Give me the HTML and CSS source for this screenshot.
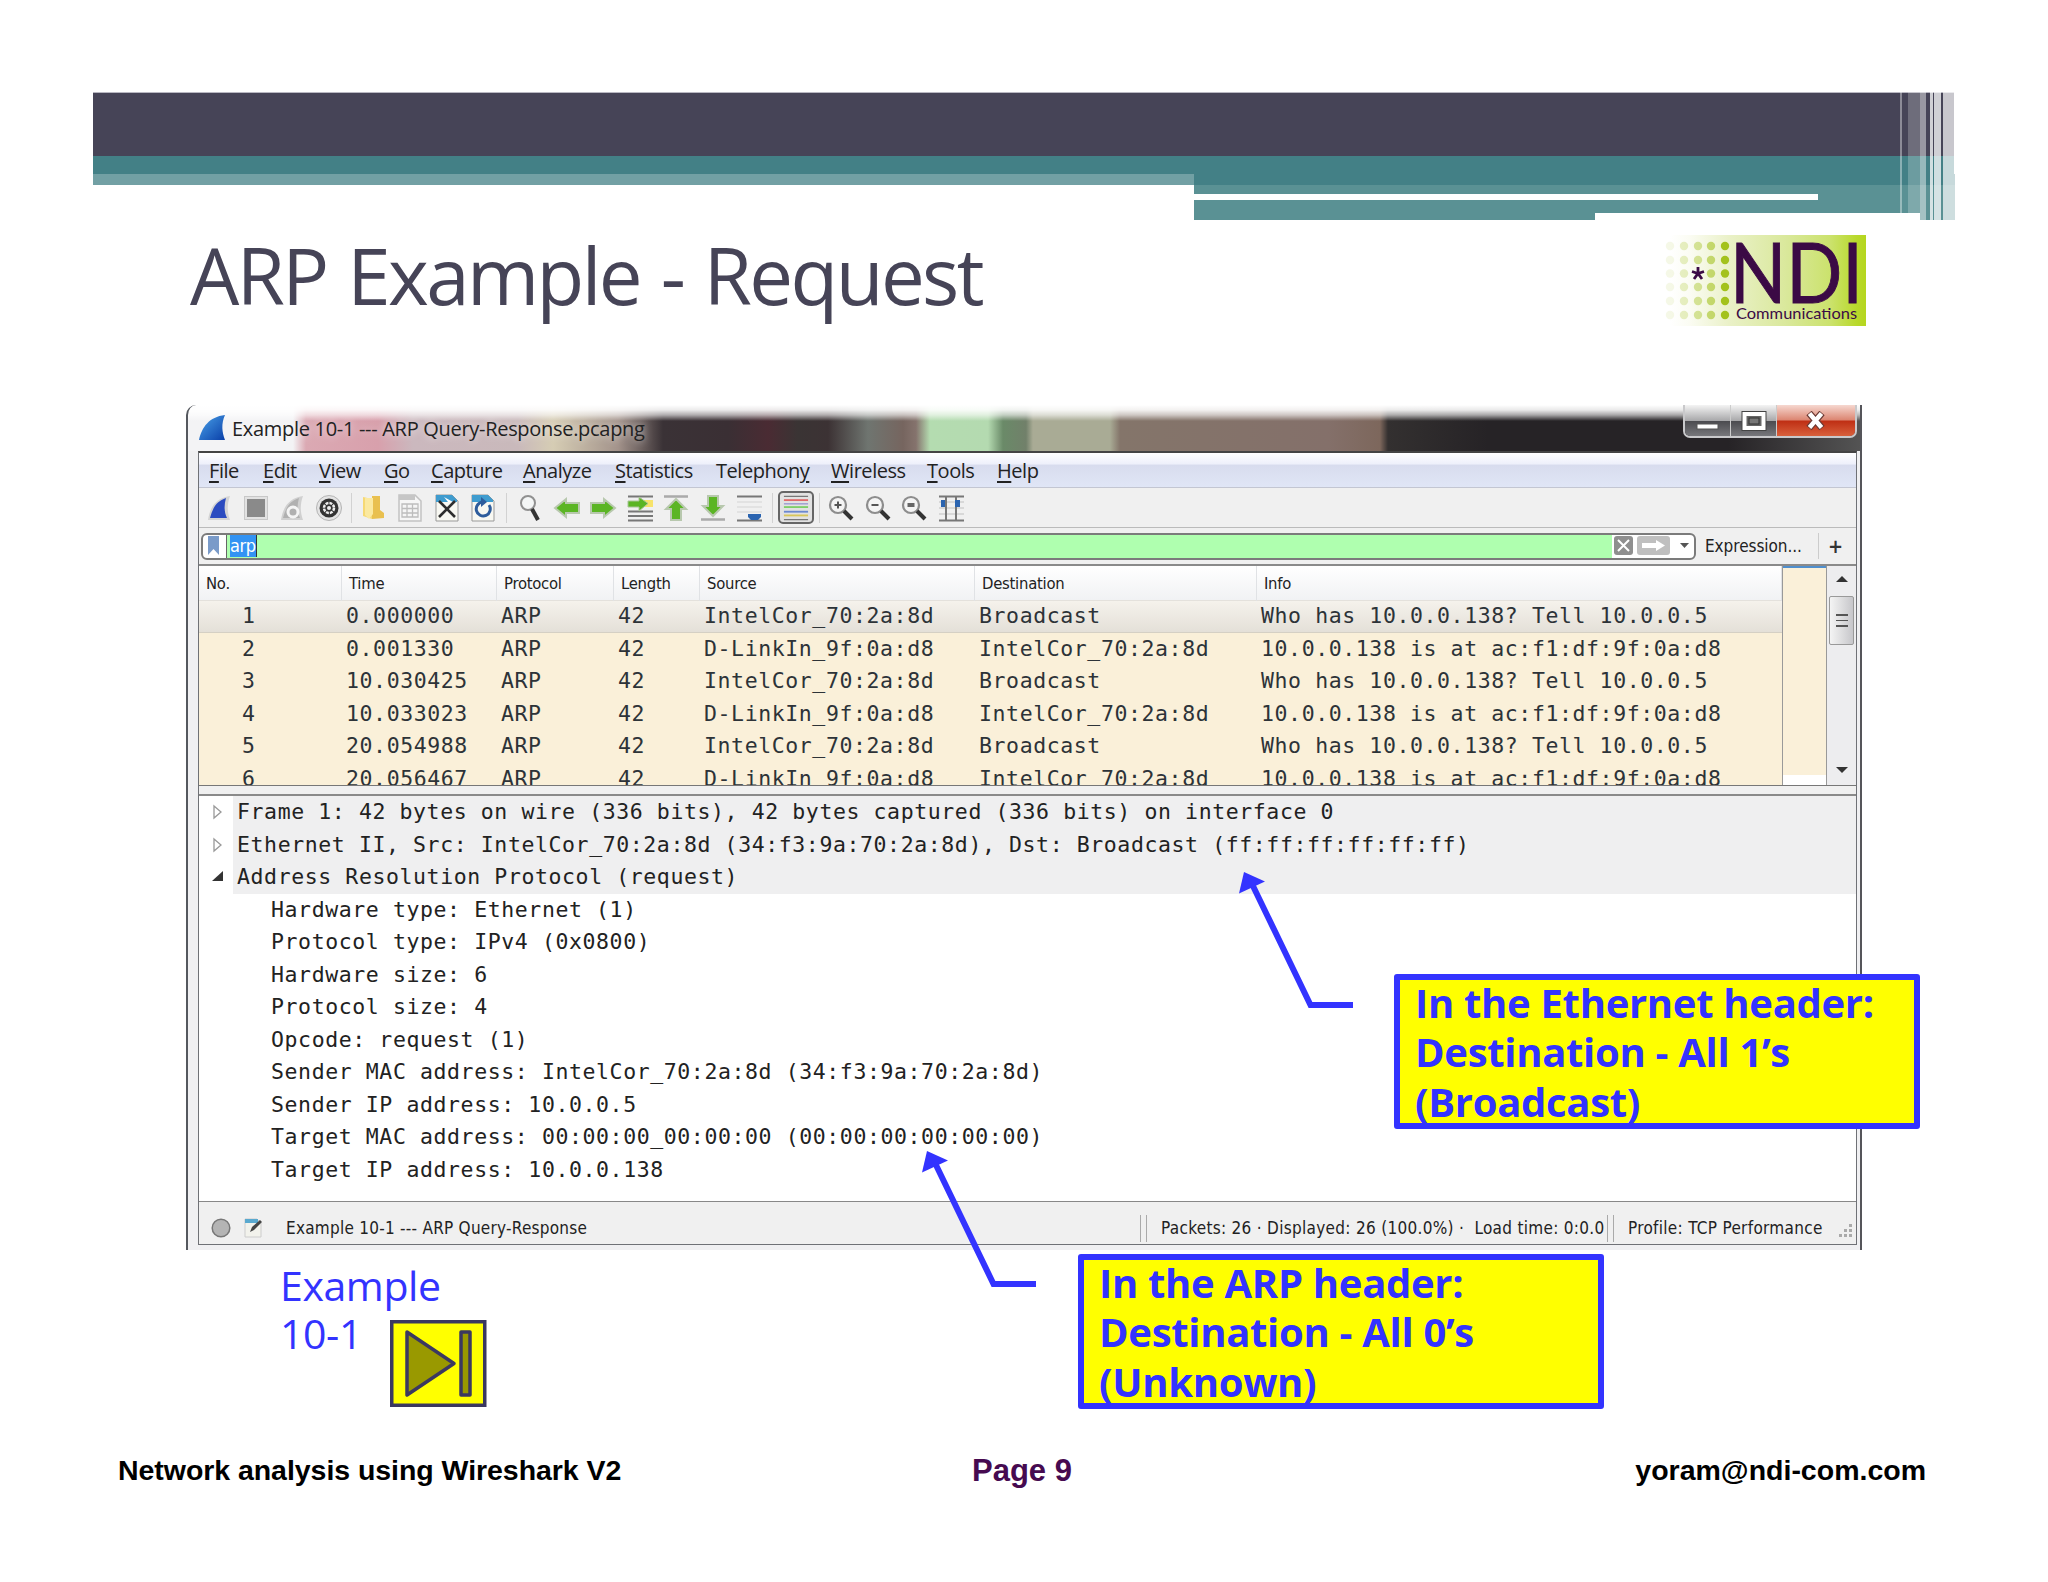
FILE: index.html
```html
<!DOCTYPE html>
<html lang="en">

<head>
    <meta charset="UTF-8">
    <meta name="viewport" content="width=device-width, initial-scale=1.0">
    <title>ARP Example - Request</title>
    <link rel="stylesheet" href="styles.css">
</head>

<body>
    <div class="slide">
        <svg class="banner" width="1862" height="128" viewBox="0 0 1862 128" shape-rendering="crispEdges">
            <rect x="0" y="0" width="1861" height="64" fill="#464457" />
            <rect x="0" y="0" width="1861" height="1" fill="#b9b8c2" />
            <rect x="0" y="64" width="1861" height="18" fill="#438086" />
            <rect x="0" y="82" width="1101" height="11" fill="#72a0a4" />
            <rect x="1101" y="82" width="761" height="11" fill="#438086" />
            <rect x="1101" y="93" width="761" height="35" fill="#5a9194" />
            <rect x="1101" y="102" width="624" height="6" fill="#fff" />
            <!-- stripes on the right edge -->
            <g fill="#fff">
                <rect x="1807" y="0" width="2" height="128" opacity=".38" />
                <rect x="1815" y="0" width="12" height="128" opacity=".22" />
                <rect x="1827" y="0" width="6" height="128" opacity=".45" />
                <rect x="1837" y="0" width="3" height="128" opacity=".75" />
                <rect x="1841" y="0" width="7" height="128" opacity=".75" />
                <rect x="1850" y="0" width="12" height="128" opacity=".7" />
                <rect x="1502" y="121" width="325" height="7" />
            </g>
        </svg>

        <div class="heading">
            <h1>ARP Example - Request</h1>
            <svg class="logo" width="196" height="91" viewBox="0 0 196 91">
                <defs>
                    <linearGradient id="fade">
                        <stop offset="0" stop-color="#fff" />
                        <stop offset=".1" stop-color="#fbfcf3" />
                        <stop offset=".3" stop-color="#eaf1c8" />
                        <stop offset=".6" stop-color="#d9e89a" />
                        <stop offset=".82" stop-color="#cbe26c" />
                        <stop offset=".95" stop-color="#b9d92c" />
                        <stop offset="1" stop-color="#b5d61e" />
                    </linearGradient>
                </defs>
                <rect width="196" height="91" fill="url(#fade)" />
                <g fill="#a3c21c">
                    <g opacity=".1"><circle cx="0" cy="11" r="4.2" /><circle cx="0" cy="25" r="4.2" /><circle cx="0" cy="38.500" r="4.2" /><circle cx="0" cy="52" r="4.2" /><circle cx="0" cy="66" r="4.2" /><circle cx="0" cy="80" r="4.2" /></g>
                    <g opacity=".25"><circle cx="14" cy="11" r="4.2" /><circle cx="14" cy="25" r="4.2" /><circle cx="14" cy="38.500" r="4.2" /><circle cx="14" cy="52" r="4.2" /><circle cx="14" cy="66" r="4.2" /><circle cx="14" cy="80" r="4.2" /></g>
                    <g opacity=".42"><circle cx="28" cy="11" r="4.2" /><circle cx="28" cy="25" r="4.2" /><circle cx="28" cy="52" r="4.2" /><circle cx="28" cy="66" r="4.2" /><circle cx="28" cy="80" r="4.2" /></g>
                    <g opacity=".58"><circle cx="41" cy="11" r="4.2" /><circle cx="41" cy="25" r="4.2" /><circle cx="41" cy="38.500" r="4.2" /><circle cx="41" cy="52" r="4.2" /><circle cx="41" cy="66" r="4.2" /><circle cx="41" cy="80" r="4.2" /></g>
                    <g><circle cx="55" cy="11" r="4.2" /><circle cx="55" cy="25" r="4.2" /><circle cx="55" cy="38.500" r="4.2" /><circle cx="55" cy="52" r="4.2" /><circle cx="55" cy="66" r="4.2" /><circle cx="55" cy="80" r="4.2" /></g>
                </g>
                <path d="M28 32v6.500M22 36.500l6 2l6-2M24 44l4-5.500l4 5.500" fill="none" stroke="#3b0a45" stroke-width="2.800" />
                <text class="logo-name" x="60" y="68" textLength="133" lengthAdjust="spacingAndGlyphs">NDI</text>
                <text class="logo-sub" x="66" y="84" textLength="121" lengthAdjust="spacingAndGlyphs">Communications</text>
            </svg>
        </div>

        <div class="window">
            <div class="titlebar">
                <svg class="fin" width="27" height="26" viewBox="0 0 27 26">
                    <defs>
                        <linearGradient id="blue" x1="0" y1="0" x2="1" y2="1">
                            <stop offset="0" stop-color="#4aa3ea" />
                            <stop offset="1" stop-color="#0a3fa8" />
                        </linearGradient>
                    </defs>
                    <path d="M0 25C3 12 10 2 26 0c-4 9-3 17 0 25z" fill="url(#blue)" />
                </svg>
                <span class="caption">Example 10-1 --- ARP Query-Response.pcapng</span>
                <div class="buttons">
                    <span class="min"><svg width="24" height="8"><rect x="1" y="1" width="21" height="5" fill="#fff" stroke="#555" /></svg></span>
                    <span class="max"><svg width="26" height="20"><rect x="3.500" y="3" width="19" height="14" fill="none" stroke="#444" stroke-width="6" /><rect x="3.500" y="3" width="19" height="14" fill="#666" stroke="#fff" stroke-width="4" /><rect x="8" y="7" width="10" height="6" fill="#777" stroke="#333" /></svg></span>
                    <span class="close"><svg width="22" height="20"><path d="M4 2l13 15M17 2L4 17" stroke="#6b3a34" stroke-width="7" /><path d="M4.500 2.500l12 14M16.500 2.500l-12 14" stroke="#fff" stroke-width="4.500" /></svg></span>
                </div>
            </div>

            <div class="client">
                <div class="menu">
                    <span><u>F</u>ile</span>
                    <span><u>E</u>dit</span>
                    <span><u>V</u>iew</span>
                    <span><u>G</u>o</span>
                    <span><u>C</u>apture</span>
                    <span><u>A</u>nalyze</span>
                    <span><u>S</u>tatistics</span>
                    <span>Telephon<u>y</u></span>
                    <span><u>W</u>ireless</span>
                    <span><u>T</u>ools</span>
                    <span><u>H</u>elp</span>
                </div>

                <div class="toolbar">
                    <svg viewBox="0 0 28 28"><path d="M3 26C5 13 11 4 25 2c-3 8-3 16 0 24z" fill="#d4d4d4" /><path d="M5 24C8 13 12 7 21 4c-2 7-2 14 1 20z" fill="#2b4bc0" /></svg>
                    <svg viewBox="0 0 28 28"><rect x="2.500" y="2.500" width="23" height="23" fill="#e2e2e2" stroke="#c8c8c8" /><rect x="5" y="5" width="18" height="18" fill="#8a8a8a" /></svg>
                    <svg viewBox="0 0 28 28"><path d="M3 26C5 13 11 4 25 2c-3 8-3 16 0 24z" fill="#d0d0d0" /><path d="M5 24C8 13 12 7 21 4c-2 7-2 14 1 20z" fill="#b0b0b0" /><circle cx="15" cy="18" r="5" fill="none" stroke="#f4f4f4" stroke-width="3" /></svg>
                    <svg viewBox="0 0 28 28"><circle cx="14" cy="14" r="12.500" fill="#e4e4e4" stroke="#b4b4b4" /><circle cx="14" cy="14" r="9.500" fill="#333" /><circle cx="14" cy="14" r="5" fill="none" stroke="#eee" stroke-width="2.500" stroke-dasharray="2.900 1" /><circle cx="14" cy="14" r="2" fill="#eee" /></svg>
                    <i class="sep"></i>
                    <svg viewBox="0 0 28 28"><path d="M3 3l9 2v20l-9-3z" fill="#f6d974" /><path d="M12 2h8v14l4 3v5l-12 1z" fill="#e9c04f" /><path d="M5 4h8v16l-4 5-4-4z" fill="#fbe9a0" /></svg>
                    <svg viewBox="0 0 28 28"><path d="M3 1h16l6 6v20H3z" fill="#f6f6f6" stroke="#c2c2c2" stroke-width="1.500" /><path d="M3 1h16v5H3z" fill="#c6c6c6" /><path d="M6 10h16v13H6zM6 14.500h16M6 19h16M11 10v13M16.500 10v13" fill="none" stroke="#bdbdbd" stroke-width="1.300" /></svg>
                    <svg viewBox="0 0 28 28"><path d="M3 1h16l6 6v20H3z" fill="#f8f8f2" stroke="#999" /><path d="M3 1h16l5 5v2H3z" fill="#3f9ccf" /><path d="M11 3l4 5h5z" fill="#fff" /><path d="M6 7l16 16M22 7L6 23" stroke="#2e2e2e" stroke-width="2.600" /></svg>
                    <svg viewBox="0 0 28 28"><path d="M3 1h16l6 6v20H3z" fill="#f8f8f2" stroke="#999" /><path d="M3 1h16l5 5v2H3z" fill="#3f9ccf" /><path d="M20 11a7 7 0 1 1-6-3" fill="none" stroke="#2e5d9c" stroke-width="3" /><path d="M12 3l6 5-6 5z" fill="#2e5d9c" /></svg>
                    <i class="sep wide"></i>
                    <svg viewBox="0 0 28 28"><circle cx="12" cy="9" r="7" fill="#f4f6f6" stroke="#909090" stroke-width="2" /><path d="M16 15l6 11" stroke="#333" stroke-width="4" /></svg>
                    <svg viewBox="0 0 28 28"><path d="M2 14L13 5v4h13v10H13v4z" fill="#5bb524" stroke="#b8c8ae" stroke-width="2" /></svg>
                    <svg viewBox="0 0 28 28"><path d="M26 14L15 5v4H2v10h13v4z" fill="#5bb524" stroke="#b8c8ae" stroke-width="2" /></svg>
                    <svg viewBox="0 0 28 28"><path d="M2 2.500h25M2 17.500h25M2 22h25M2 26.500h25" stroke="#777" stroke-width="1.800" /><rect x="16" y="6" width="11" height="7" fill="#f7e36a" /><path d="M22 9.500L13 3v4H2v6h11v4z" fill="#5bb524" stroke="#a8c496" /></svg>
                    <svg viewBox="0 0 28 28"><path d="M2 2.500h24" stroke="#aaa" stroke-width="2.500" /><path d="M14 5L4 15h5v11h10V15h5z" fill="#5bb524" stroke="#b8c8ae" stroke-width="2" /></svg>
                    <svg viewBox="0 0 28 28"><path d="M2 25.500h24" stroke="#aaa" stroke-width="2.500" /><path d="M14 22L4 12h5V2h10v10h5z" fill="#5bb524" stroke="#b8c8ae" stroke-width="2" /></svg>
                    <svg viewBox="0 0 28 28"><path d="M2 2.500h25M2 26.500h25" stroke="#777" stroke-width="2" /><path d="M2 8h25M2 13h25M2 18h25" stroke="#ddd" stroke-width="1.500" /><path d="M13 20h13v3l-3 3h-7l-3-3z" fill="#2b64b0" /></svg>
                    <i class="sep wide"></i>
                    <span class="pressed"><svg viewBox="0 0 28 28"><path d="M1 1.500h26M1 26.500h26" stroke="#777" stroke-width="1.500" /><path d="M1 5.500h26" stroke="#e06a6a" stroke-width="2" /><path d="M1 9.500h26" stroke="#9a9ad0" stroke-width="1.500" /><path d="M1 13h26" stroke="#7fce6a" stroke-width="2" /><path d="M1 18h26" stroke="#6b88d0" stroke-width="2" /><path d="M1 22h26" stroke="#d8c65a" stroke-width="2" /></svg></span>
                    <i class="sep"></i>
                    <svg viewBox="0 0 28 28"><circle cx="11" cy="11" r="8" fill="#f4f4f4" stroke="#8d8d8d" stroke-width="2.200" /><path d="M11 7.500v7M7.500 11h7" stroke="#555" stroke-width="2" /><path d="M17 17l8 8" stroke="#333" stroke-width="4" /></svg>
                    <svg viewBox="0 0 28 28"><circle cx="11" cy="11" r="8" fill="#f4f4f4" stroke="#8d8d8d" stroke-width="2.200" /><path d="M7.500 11h7" stroke="#555" stroke-width="2" /><path d="M17 17l8 8" stroke="#333" stroke-width="4" /></svg>
                    <svg viewBox="0 0 28 28"><circle cx="11" cy="11" r="8" fill="#f4f4f4" stroke="#8d8d8d" stroke-width="2.200" /><path d="M7.500 11h7" stroke="#666" stroke-width="4" /><path d="M17 17l8 8" stroke="#333" stroke-width="4" /></svg>
                    <svg viewBox="0 0 28 28"><path d="M2 2.500h25M2 26.500h25" stroke="#777" stroke-width="2" /><path d="M2 8h25M2 14h25M2 20h25" stroke="#d0d0d0" stroke-width="1.500" /><path d="M9 3v23M19 3v23" stroke="#777" stroke-width="2" /><path d="M4 6h4v7H4zM18 6h5v7h-5z" fill="#2b64b0" /></svg>
                </div>

                <div class="filter">
                    <div class="field">
                        <svg width="23" height="24" viewBox="0 0 23 24"><path d="M5 2h11v19l-5.500-6L5 21z" fill="#7a9bc9" /></svg>
                        <div class="expr"><mark>arp</mark></div>
                        <svg width="82" height="24" viewBox="0 0 82 24">
                            <rect x="2" y="2" width="19" height="19" rx="3" fill="#8f8f8f" />
                            <path d="M6 6l11 11M17 6L6 17" stroke="#fff" stroke-width="2" />
                            <rect x="25" y="2" width="33" height="19" rx="3" fill="#bfbfbf" />
                            <path d="M30 9h14V6l9 5.500-9 5.500v-3H30z" fill="#fff" />
                            <path d="M68 9h9l-4.500 5z" fill="#555" />
                        </svg>
                    </div>
                    <span class="expression">Expression...</span>
                    <i class="sep"></i>
                    <span class="plus">+</span>
                </div>

                <div class="packets">
                    <div class="list">
                        <div class="row head"><span>No.</span><span>Time</span><span>Protocol</span><span>Length</span><span>Source</span><span>Destination</span><span>Info</span></div>
                        <div class="row selected"><span>1</span><span>0.000000</span><span>ARP</span><span>42</span><span>IntelCor_70:2a:8d</span><span>Broadcast</span><span>Who has 10.0.0.138? Tell 10.0.0.5</span></div>
                        <div class="row"><span>2</span><span>0.001330</span><span>ARP</span><span>42</span><span>D-LinkIn_9f:0a:d8</span><span>IntelCor_70:2a:8d</span><span>10.0.0.138 is at ac:f1:df:9f:0a:d8</span></div>
                        <div class="row"><span>3</span><span>10.030425</span><span>ARP</span><span>42</span><span>IntelCor_70:2a:8d</span><span>Broadcast</span><span>Who has 10.0.0.138? Tell 10.0.0.5</span></div>
                        <div class="row"><span>4</span><span>10.033023</span><span>ARP</span><span>42</span><span>D-LinkIn_9f:0a:d8</span><span>IntelCor_70:2a:8d</span><span>10.0.0.138 is at ac:f1:df:9f:0a:d8</span></div>
                        <div class="row"><span>5</span><span>20.054988</span><span>ARP</span><span>42</span><span>IntelCor_70:2a:8d</span><span>Broadcast</span><span>Who has 10.0.0.138? Tell 10.0.0.5</span></div>
                        <div class="row"><span>6</span><span>20.056467</span><span>ARP</span><span>42</span><span>D-LinkIn_9f:0a:d8</span><span>IntelCor_70:2a:8d</span><span>10.0.0.138 is at ac:f1:df:9f:0a:d8</span></div>
                    </div>
                    <div class="minimap"></div>
                    <div class="scrollbar">
                        <svg width="28" height="30"><path d="M8 16l6-6 6 6z" fill="#333" /></svg>
                        <div class="thumb"><i></i><i></i><i></i></div>
                        <svg class="down" width="28" height="30"><path d="M8 12h12l-6 6z" fill="#333" /></svg>
                    </div>
                </div>

                <div class="details">
                    <div class="node"><svg width="12" height="16"><path d="M2 2l7 6-7 6z" fill="#fff" stroke="#999" stroke-width="1.300" /></svg><span>Frame 1: 42 bytes on wire (336 bits), 42 bytes captured (336 bits) on interface 0</span></div>
                    <div class="node"><svg width="12" height="16"><path d="M2 2l7 6-7 6z" fill="#fff" stroke="#999" stroke-width="1.300" /></svg><span>Ethernet II, Src: IntelCor_70:2a:8d (34:f3:9a:70:2a:8d), Dst: Broadcast (ff:ff:ff:ff:ff:ff)</span></div>
                    <div class="node"><svg width="12" height="16"><path d="M11 2v10H0z" fill="#333" /></svg><span>Address Resolution Protocol (request)</span></div>
                    <div class="leaf">Hardware type: Ethernet (1)</div>
                    <div class="leaf">Protocol type: IPv4 (0x0800)</div>
                    <div class="leaf">Hardware size: 6</div>
                    <div class="leaf">Protocol size: 4</div>
                    <div class="leaf">Opcode: request (1)</div>
                    <div class="leaf">Sender MAC address: IntelCor_70:2a:8d (34:f3:9a:70:2a:8d)</div>
                    <div class="leaf">Sender IP address: 10.0.0.5</div>
                    <div class="leaf">Target MAC address: 00:00:00_00:00:00 (00:00:00:00:00:00)</div>
                    <div class="leaf">Target IP address: 10.0.0.138</div>
                </div>

                <div class="status">
                    <svg width="20" height="20"><circle cx="10" cy="10" r="8.800" fill="#b4b4b4" stroke="#777" stroke-width="1.500" /></svg>
                    <svg class="note" width="20" height="20" viewBox="0 0 20 20"><path d="M1 1h12l4 4v14H1z" fill="#f2f2ec" stroke="#ccc" /><path d="M1 1h13v4H1z" fill="#5aa9cf" /><path d="M6 14l2-5 8-7 2 2-8 8z" fill="#444" /></svg>
                    <span class="file">Example 10-1 --- ARP Query-Response</span>
                    <i class="grip"></i>
                    <span class="counts">Packets: 26 · Displayed: 26 (100.0%) ·&nbsp; Load time: 0:0.0</span>
                    <i class="grip"></i>
                    <span class="profile">Profile: TCP Performance</span>
                    <svg class="resize" width="16" height="16" fill="#aaa"><path d="M11 0h3v3h-3zM6 5h3v3H6zM11 5h3v3h-3zM1 10h3v3H1zM6 10h3v3H6zM11 10h3v3h-3z" /></svg>
                </div>
            </div>
        </div>

        <div class="example">Example<br>10-1</div>

        <div class="footer">
            <span class="course">Network analysis using Wireshark V2</span>
            <span class="page">Page 9</span>
            <span class="mail">yoram@ndi-com.com</span>
        </div>

        <!-- annotations over the window -->
        <svg class="play" width="97" height="87" viewBox="0 0 97 87">
            <rect x="1.750" y="1.750" width="93" height="83.500" fill="#ff0" stroke="#3b3860" stroke-width="3.500" />
            <path d="M17 12l47 31.500L17 75z" fill="#999900" stroke="#3b3860" stroke-width="3.500" stroke-linejoin="round" />
            <path d="M71 12h9v63h-9z" fill="#999900" stroke="#3b3860" stroke-width="3.500" stroke-linejoin="round" />
        </svg>
        <svg class="arrow arrow-eth" width="116" height="138" viewBox="0 0 116 138">
            <path d="M14 14l57.500 119H114" fill="none" stroke="#33f" stroke-width="6" />
            <path d="M5 0l21 9.500L0 21.500z" fill="#33f" />
        </svg>
        <svg class="arrow arrow-arp" width="116" height="138" viewBox="0 0 116 138">
            <path d="M14 14l57.500 119H114" fill="none" stroke="#33f" stroke-width="6" />
            <path d="M5 0l21 9.500L0 21.500z" fill="#33f" />
        </svg>
        <div class="callout callout-eth">In the Ethernet header:<br>Destination - All 1’s<br>(Broadcast)</div>
        <div class="callout callout-arp">In the ARP header:<br>Destination - All 0’s<br>(Unknown)</div>
    </div>
</body>

</html>
```

FILE: styles.css
```css
* {
    margin: 0;
    padding: 0;
    box-sizing: border-box;
}

body {
    background: #fff;
}

svg {
    display: block;
    flex: none;
}

.slide {
    position: relative;
    width: 2048px;
    height: 1582px;
    padding-top: 92px;
    overflow: hidden;
    font-family: "Open Sans", sans-serif;
}

.banner {
    margin-left: 93px;
}

.heading {
    display: flex;
    justify-content: space-between;
    height: 185px;
    padding: 0 182px 0 190px;
}

.heading h1 {
    font-family: "Trebuchet MS", "Open Sans", sans-serif;
    font-size: 78px;
    font-weight: 500;
    line-height: 110px;
    letter-spacing: -2.6px;
    word-spacing: 3px;
    color: #464457;
    white-space: nowrap;
}

.logo {
    margin-top: 15px;
    overflow: visible;
}

.logo-name {
    font-family: Lato, sans-serif;
    font-size: 84px;
    fill: #3b0a45;
    stroke: #3b0a45;
    stroke-width: 1px;
}

.logo-sub {
    font-family: Lato, sans-serif;
    font-size: 16px;
    fill: #3b0a45;
}

/* window */
.window {
    width: 1676px;
    height: 845px;
    margin-left: 186px;
    padding: 0 3px 0 10px;
    border-left: 2px solid #55585e;
    border-right: 2px solid #55555a;
    border-top-left-radius: 10px;
    background:
        linear-gradient(#fff 0, rgba(255, 255, 255, .9) 5px, rgba(255, 255, 255, .6) 10px, rgba(255, 255, 255, 0) 16px) 0 0 / 100% 46px no-repeat,
        linear-gradient(90deg, #f3f3f5 105px, #dba9b3 118px, #d8a0ac 190px, #cbb8be 225px, #c9b9bb 330px, #d6cdb4 365px, #a3938b 430px, #3a3236 475px, #3a2f34 540px, #4a2b33 580px, #3a3434 610px, #3c3234 640px, #6f7570 680px, #76655f 715px, #85736d 728px, #b4dcb0 742px, #b4dab0 800px, #6a8a68 815px, #71806a 838px, #a9ab95 845px, #a9ab95 922px, #84756a 932px, #84706a 1140px, #7d675c 1192px, #333030 1200px, #262326 1300px, #262326 1540px, #555 1676px) 0 0 / 100% 46px no-repeat,
        #f0f0f2;
}

.titlebar {
    display: flex;
    height: 46px;
    padding-left: 1px;
}

.fin {
    margin-top: 10px;
}

.caption {
    margin: 10px 0 0 6px;
    font-size: 20px;
    line-height: 27px;
    letter-spacing: -.3px;
    color: #222;
    white-space: nowrap;
    text-shadow: 0 0 8px rgba(255, 255, 255, .8);
}

.buttons {
    display: flex;
    width: 174px;
    height: 33px;
    margin-left: auto;
    border: 2px solid #c9c9cb;
    border-top: 0;
    border-radius: 0 0 7px 7px;
    overflow: hidden;
}

.buttons span {
    display: flex;
    justify-content: center;
    align-items: center;
}

.min,
.max {
    width: 46px;
    border-right: 1px solid #ccc;
    background: linear-gradient(#f4f4f4, #a9a9ab 50%, #4b4b4f 52%, #77777b);
}

.min {
    padding-top: 12px;
}

.close {
    flex: 1;
    background: linear-gradient(#f6d8d0, #dc8672 48%, #bf2f14 52%, #d8603c);
}

.client {
    height: 794px;
    border: 1px solid #6f7176;
    border-top: 2px solid #444;
    background: #f0f0f0;
}

.menu {
    display: grid;
    grid-template-columns: 54px 56px 65px 47px 92px 92px 101px 115px 96px 70px auto;
    height: 35px;
    padding-left: 10px;
    border-bottom: 1px solid #c3c6d2;
    background: linear-gradient(#fff, #eef0fb 32%, #d8dcee 36%, #e0e6f6);
    font-size: 20px;
    line-height: 36px;
    letter-spacing: -.45px;
    color: #222;
    white-space: nowrap;
}

.menu u {
    text-underline-offset: 3px;
}

.toolbar {
    display: flex;
    align-items: center;
    height: 40px;
    padding-left: 6px;
    border-bottom: 1px solid #bbb;
    gap: 8.5px;
}

.toolbar svg {
    width: 28px;
    height: 28px;
}

.toolbar .sep {
    width: 1px;
    height: 30px;
    margin-right: -1px;
    background: #d2d2d2;
}

.toolbar .wide {
    margin-right: 1px;
}

.pressed {
    display: flex;
    justify-content: center;
    align-items: center;
    width: 36px;
    height: 33px;
    margin: 0 -4px;
    border: 2px solid #666;
    border-radius: 5px;
    background: #e2e2e2;
}

.pressed svg {
    width: 26px;
}

.filter {
    display: flex;
    align-items: center;
    height: 36px;
    padding-left: 2px;
    font-family: "DejaVu Sans Condensed", "DejaVu Sans", sans-serif;
}

.field {
    display: flex;
    align-items: center;
    width: 1495px;
    height: 27px;
    border: 2px solid #7b7b7b;
    border-radius: 6px;
    background: #fff;
}

.expr {
    flex: 1;
    height: 23px;
    padding: 0 3px;
    border-left: 1px solid #666;
    background: #afffaf;
    font-size: 18px;
    line-height: 22px;
}

.expr mark {
    display: inline-block;
    height: 22px;
    border-right: 1px solid #333;
    background: #3393f3;
    color: #fff;
    letter-spacing: -.4px;
}

.expression {
    width: 113px;
    margin-left: 9px;
    font-size: 17px;
    letter-spacing: -.05px;
    color: #222;
}

.filter .sep {
    width: 1px;
    height: 26px;
    background: #ccc;
}

.plus {
    margin-left: 9px;
    font-size: 20px;
    font-weight: 700;
    color: #333;
}

/* packet list */
.packets {
    display: flex;
    height: 222px;
    border-top: 2px solid #8a8a8a;
    border-bottom: 1px solid #777;
}

.list {
    width: 1583px;
    overflow: hidden;
    background: #faf0d9;
}

.row {
    display: grid;
    grid-template-columns: 143px 155px 117px 86px 275px 282px 1fr;
    height: 32.5px;
    font-family: Consolas, "DejaVu Sans Mono", monospace;
    font-size: 21.5px;
    line-height: 32.5px;
    letter-spacing: .6px;
    color: #2d3338;
    white-space: nowrap;
}

.row span {
    padding-left: 4px;
}

.row span:first-child {
    padding-left: 43px;
}

.row.head {
    height: 34px;
    background: linear-gradient(#fff, #f1f2f4);
    font-family: "DejaVu Sans Condensed", "DejaVu Sans", sans-serif;
    font-size: 16.5px;
    line-height: 35px;
    letter-spacing: -.25px;
    color: #222;
}

.row.head span {
    padding-left: 7px;
    border-right: 1px solid #e0e2e5;
}

.row.selected {
    border-top: 1px solid #e4e1dc;
    border-bottom: 1px solid #d5d0c4;
    background: linear-gradient(#f5f2ec, #e4e0d8);
    line-height: 30px;
}

.minimap {
    width: 45px;
    border: 1px solid #999;
    border-width: 0 1px;
    background: linear-gradient(#4f8fce 2px, #faf0d9 2px, #faf0d9 209px, #fff 209px);
}

.scrollbar {
    display: flex;
    flex-direction: column;
    align-items: center;
    flex: 1;
    background: #ededef;
}

.thumb {
    display: flex;
    flex-direction: column;
    justify-content: center;
    align-items: center;
    gap: 4px;
    width: 25px;
    height: 49px;
    border: 1px solid #999;
    border-radius: 2px;
    background: linear-gradient(90deg, #f4f4f4, #d9d9db 60%, #c6c6ca);
}

.thumb i {
    width: 12px;
    height: 1.5px;
    background: #555;
}

.down {
    margin-top: auto;
}

/* packet details */
.details {
    height: 408px;
    margin-top: 8px;
    border-top: 2px solid #8a8a8a;
    border-bottom: 1px solid #888;
    background: #fff;
    font-family: Consolas, "DejaVu Sans Mono", monospace;
    font-size: 21.5px;
    line-height: 32.5px;
    letter-spacing: .6px;
    color: #222;
    white-space: nowrap;
}

.node {
    display: flex;
    align-items: center;
    gap: 9px;
    height: 32.5px;
    padding-left: 13px;
}

.node span {
    flex: 1;
    padding-left: 4px;
    background: #efeff0;
}

.leaf {
    height: 32.5px;
    padding-left: 72px;
}

.status {
    display: flex;
    align-items: center;
    height: 43px;
    padding: 9px 0 0 12px;
    font-family: "DejaVu Sans Condensed", "DejaVu Sans", sans-serif;
    font-size: 17px;
    letter-spacing: .25px;
    color: #222;
    white-space: nowrap;
}

.note {
    margin-left: 13px;
}

.file {
    width: 854px;
    margin-left: 22px;
}

.grip {
    width: 7px;
    height: 27px;
    border: 1px solid #aaa;
    border-width: 0 1px;
}

.counts {
    width: 446px;
    margin-left: 14px;
    letter-spacing: .3px;
}

.profile {
    margin-left: 14px;
    letter-spacing: .3px;
}

.resize {
    margin: 8px 2px 0 auto;
}

/* slide texts */
.example {
    height: 172px;
    padding: 11px 0 0 280px;
    font-family: "Comic Sans MS", "Open Sans", sans-serif;
    font-size: 41px;
    line-height: 48px;
    letter-spacing: -.4px;
    color: #33f;
}

.footer {
    display: grid;
    grid-template-columns: 854px 1fr auto;
    padding: 30px 122px 0 118px;
    font-family: Arial, "Liberation Sans", sans-serif;
    font-size: 28.5px;
    font-weight: 700;
    line-height: 36px;
    color: #000;
}

.course {
    letter-spacing: -.05px;
}

.page {
    padding-top: 1px;
    color: #460a50;
    font-size: 31px;
}

.play {
    position: absolute;
    left: 390px;
    top: 1320px;
}

.arrow {
    position: absolute;
}

.arrow-eth {
    left: 1239px;
    top: 872px;
}

.arrow-arp {
    left: 922px;
    top: 1151px;
}

.callout {
    position: absolute;
    width: 526px;
    height: 155px;
    padding-left: 15px;
    border: 6px solid #33f;
    border-radius: 3px;
    background: #ff0;
    font-family: "Trebuchet MS", "Open Sans", sans-serif;
    font-size: 40px;
    font-weight: 700;
    line-height: 49.5px;
    letter-spacing: -.3px;
    color: #33f;
    white-space: nowrap;
}

/* text sits a little high in the box */
.callout::before {
    content: "";
    display: block;
    margin-top: -2.5px;
}

.callout-eth {
    left: 1394px;
    top: 974px;
}

.callout-arp {
    left: 1078px;
    top: 1254px;
}
```
